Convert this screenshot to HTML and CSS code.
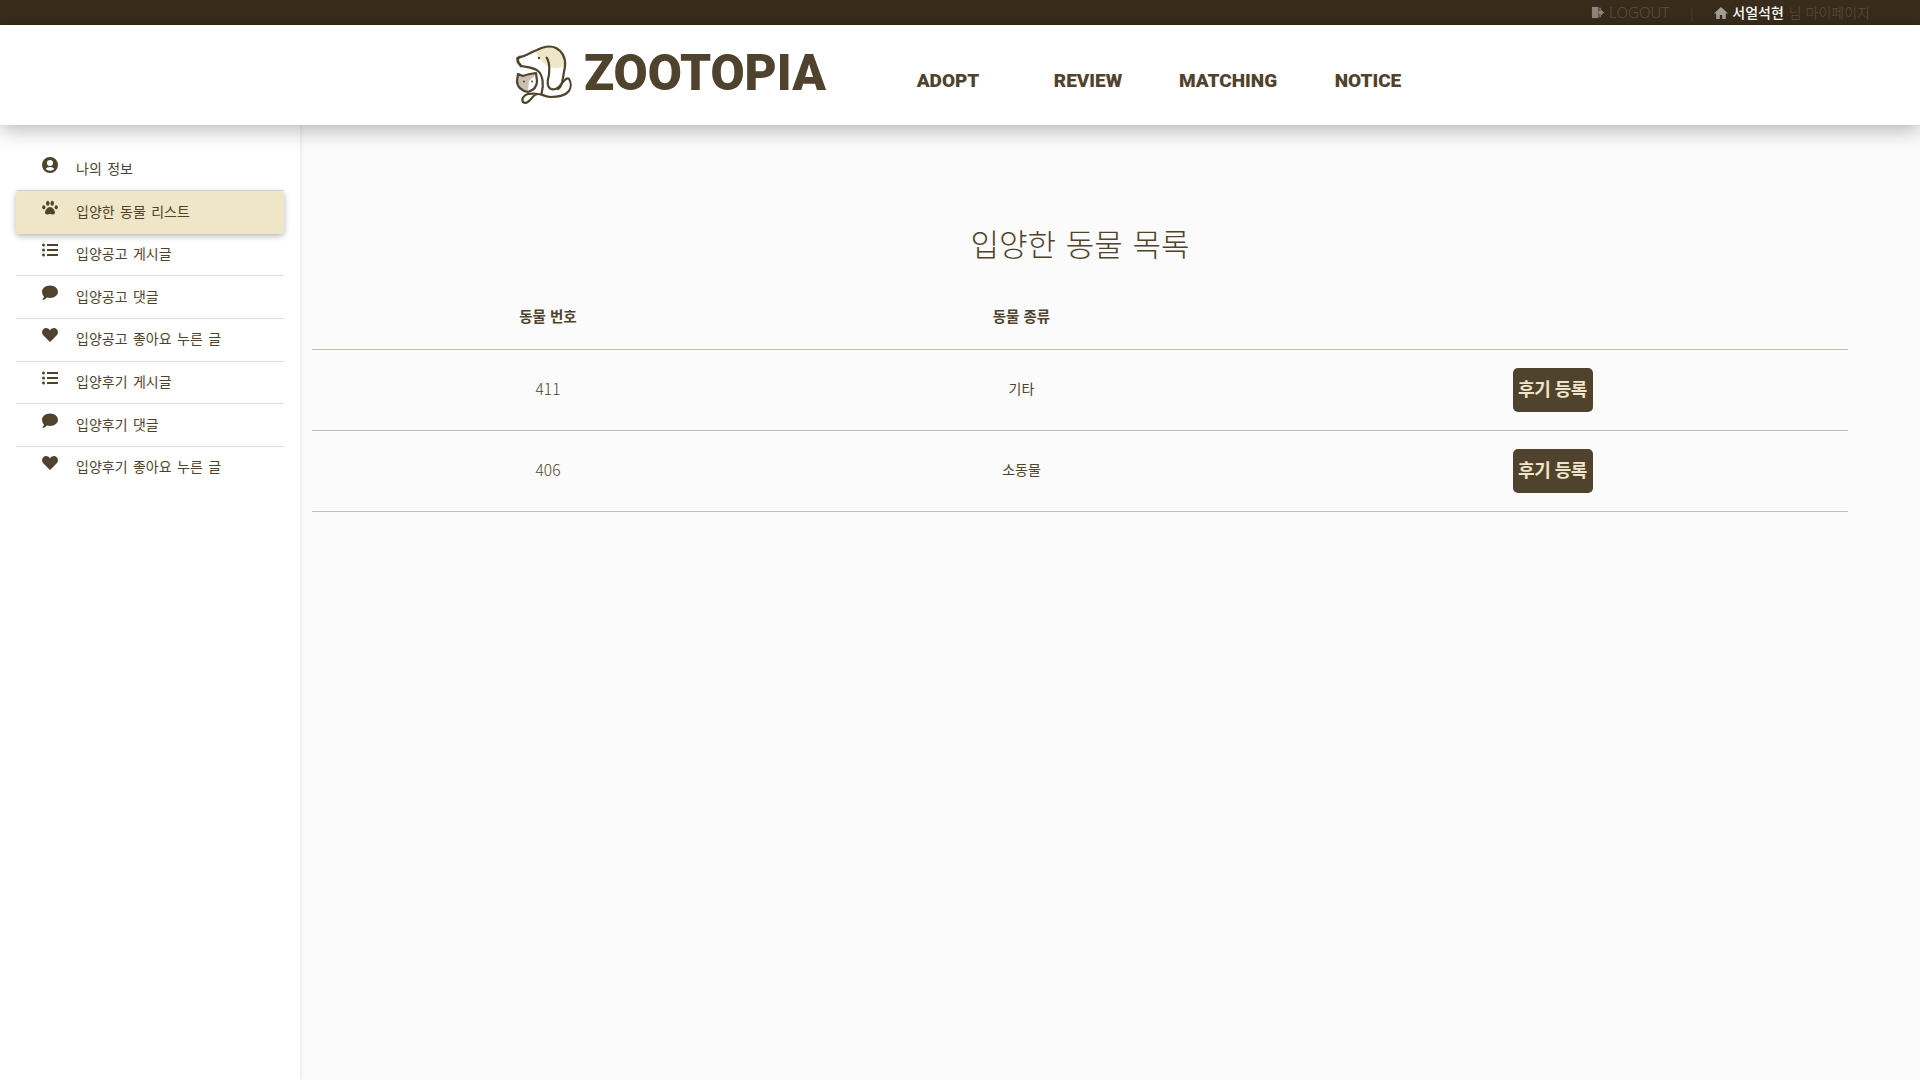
FILE: index.html
```html
<!DOCTYPE html>
<html lang="ko">
<head>
<meta charset="utf-8">
<title>ZOOTOPIA</title>
<link rel="stylesheet" href="styles.css">
</head>
<body>
<div class="topbar">
  <a class="top-dim top-link">
    <svg class="top-icon" viewBox="0 0 14 14"><path d="M1 1h7v12H1z" fill="#8f877c"/><path d="M9 2h1.500v3H9zM9 9h1.500v3H9z" fill="#8f877c"/><path d="M8 5.500h2.500V3.500L14 7l-3.500 3.500V8.500H8z" fill="#8f877c"/></svg>
    LOGOUT
  </a>
  <span class="top-dim top-sep">|</span>
  <svg class="top-icon home" viewBox="0 0 14 14"><path d="M7 1 0 7.500h2.200V13h3.600V9h2.400v4h3.600V7.500H14z" fill="#a8a196"/></svg>
  <span class="top-name">서얼석현</span>
  <span class="top-dim top-my">님 마이페이지</span>
</div>

<header class="header">
  <a class="logo">
    <svg class="logo-mark" viewBox="15 13 60 62">
      <path d="M35 20C42 16 50 14 56 17 62 20 66 27 65 35 58 38 50 38 45 33 41 30 38 25 35 20Z" fill="#efe6c8"/>
      <path d="M20 26C26 25 31 21 37 19 42 16 50 14 56 17 62 20 66 27 65 35 64 41 63 47 62 52 61 55 60 57 58 58" fill="none" stroke="#50432e" stroke-width="2.200" stroke-linecap="round"/>
      <path d="M20 26 17.500 27.500 18 31 21 35" fill="none" stroke="#50432e" stroke-width="2.800" stroke-linecap="round" stroke-linejoin="round"/>
      <path d="M21 35C26 36 33 36 38 40 43 44 44 54 41.500 63" fill="none" stroke="#50432e" stroke-width="2.200" stroke-linecap="round"/>
      <path d="M46.700 26.700C50 32 50 42 47.700 50 47.500 54 48.500 57 51 58 55 59 59 57 62 52" fill="none" stroke="#50432e" stroke-width="2.200" stroke-linecap="round"/>
      <path d="M62 52C65 49 67 46 69 48 71 51 71.500 56 69 60 65 65 57 66 50 66 44 65 41 63 38 63 34 63 33 66 31 68 28 71.500 25 72.500 23 71 21 68 24 64 28 63 31 62.500 35 62.500 38 63" fill="none" stroke="#50432e" stroke-width="2.200" stroke-linecap="round"/>
      <path d="M18 43 23 45C25.500 44 28 43.500 30 43L36 42 37 50C37 55 35 59 28 61 22 60 17 56 17 50Z" fill="#cbc1b2"/>
      <path d="M29 50 36.500 43 37 50C37 55 35 59 28 61Z" fill="#fff"/>
      <path d="M18 43 23 45C25.500 44 28 43.500 30 43L36 42 37 50C37 55 35 59 28 61 22 60 17 56 17 50Z" fill="none" stroke="#50432e" stroke-width="2.200" stroke-linejoin="round"/>
      <circle cx="39" cy="27" r="1.200" fill="#50432e"/><circle cx="24" cy="50.500" r=".9" fill="#50432e"/><circle cx="32" cy="50.500" r=".9" fill="#50432e"/>
    </svg>
    <span class="logo-text">ZOOTOPIA</span>
  </a>
  <nav class="nav">
    <a class="nav-item">ADOPT</a>
    <a class="nav-item">REVIEW</a>
    <a class="nav-item">MATCHING</a>
    <a class="nav-item">NOTICE</a>
  </nav>
</header>

<div class="layout">
  <aside class="sidebar">
    <a class="side-item">
      <svg class="side-icon" viewBox="0 0 16 16"><path fill-rule="evenodd" d="M8 0a8 8 0 1 1 0 16A8 8 0 0 1 8 0Zm0 3a3 3 0 1 0 0 6 3 3 0 0 0 0-6Zm0 7c-2 0-3.700.8-4.300 2a6 6 0 0 0 8.600 0C11.700 10.800 10 10 8 10Z"/></svg>
      나의 정보
    </a>
    <a class="side-item active">
      <svg class="side-icon" viewBox="0 0 16 16"><path d="M8 7c2.500 0 5 3.300 5 5.800 0 1.300-1 1.700-2.100 1.700-1.200 0-2-.6-2.900-.6s-1.700.6-2.900.6C4 14.500 3 14.100 3 12.800 3 10.300 5.500 7 8 7Z"/><ellipse cx="5.800" cy="3.300" rx="1.700" ry="2.500"/><ellipse cx="10.200" cy="3.300" rx="1.700" ry="2.500"/><ellipse cx="1.800" cy="7.300" rx="1.600" ry="2.100"/><ellipse cx="14.200" cy="7.300" rx="1.600" ry="2.100"/></svg>
      입양한 동물 리스트
    </a>
    <a class="side-item">
      <svg class="side-icon" viewBox="0 0 16 16"><circle cx="1.500" cy="3" r="1.500"/><circle cx="1.500" cy="8" r="1.500"/><circle cx="1.500" cy="13" r="1.500"/><path d="M5 2h11v2H5zM5 7h11v2H5zM5 12h11v2H5z"/></svg>
      입양공고 게시글
    </a>
    <a class="side-item">
      <svg class="side-icon" viewBox="0 0 16 16"><path d="M8 .5c4.400 0 8 2.800 8 6.200s-3.600 6.200-8 6.200c-1 0-2-.1-2.900-.4C4 13.500 2.200 15 0 15c1-.9 1.700-2.400 1.900-3.500C.7 10.300 0 8.500 0 6.700 0 3.300 3.600.5 8 .5Z"/></svg>
      입양공고 댓글
    </a>
    <a class="side-item">
      <svg class="side-icon" viewBox="0 0 16 16"><path d="M8 15 1.500 8.500C-.5 6.500-.3 3.500 1.500 2 3.400.5 6 .9 8 3.200 10 .9 12.600.5 14.500 2c1.800 1.500 2 4.500 0 6.500Z"/></svg>
      입양공고 좋아요 누른 글
    </a>
    <a class="side-item">
      <svg class="side-icon" viewBox="0 0 16 16"><circle cx="1.500" cy="3" r="1.500"/><circle cx="1.500" cy="8" r="1.500"/><circle cx="1.500" cy="13" r="1.500"/><path d="M5 2h11v2H5zM5 7h11v2H5zM5 12h11v2H5z"/></svg>
      입양후기 게시글
    </a>
    <a class="side-item">
      <svg class="side-icon" viewBox="0 0 16 16"><path d="M8 .5c4.400 0 8 2.800 8 6.200s-3.600 6.200-8 6.200c-1 0-2-.1-2.900-.4C4 13.500 2.200 15 0 15c1-.9 1.700-2.400 1.900-3.500C.7 10.300 0 8.500 0 6.700 0 3.300 3.600.5 8 .5Z"/></svg>
      입양후기 댓글
    </a>
    <a class="side-item last">
      <svg class="side-icon" viewBox="0 0 16 16"><path d="M8 15 1.500 8.500C-.5 6.500-.3 3.500 1.500 2 3.400.5 6 .9 8 3.200 10 .9 12.600.5 14.500 2c1.800 1.500 2 4.500 0 6.500Z"/></svg>
      입양후기 좋아요 누른 글
    </a>
  </aside>

  <main class="content">
    <h1 class="title">입양한 동물 목록</h1>
    <table class="list">
      <colgroup><col class="col-a"><col class="col-b"><col class="col-c"></colgroup>
      <thead>
        <tr><th>동물 번호</th><th>동물 종류</th><th></th></tr>
      </thead>
      <tbody>
        <tr><td class="num">411</td><td>기타</td><td><button class="btn">후기 등록</button></td></tr>
        <tr><td class="num">406</td><td>소동물</td><td><button class="btn">후기 등록</button></td></tr>
      </tbody>
    </table>
  </main>
</div>
</body>
</html>
```
FILE: styles.css
```css
* { box-sizing: border-box; }
html, body { margin: 0; height: 100%; }
body {
  display: flex;
  flex-direction: column;
  height: 1080px;
  overflow: hidden;
  font-family: "Noto Sans CJK KR", "Noto Sans", sans-serif;
  color: #50432e;
  background: #fff;
}

.topbar {
  height: 25px;
  flex: none;
  background: #392c1b;
  display: flex;
  align-items: center;
  justify-content: flex-end;
  padding-right: 50px;
  font-size: 14px;
  line-height: 25px;
}
.top-dim { color: #5d5141; font-weight: 300; }
.top-link { display: flex; align-items: center; font-family: "Noto Sans", sans-serif; font-size: 15px; gap: 5px; }
.top-sep { margin: 0 21px; font-size: 12px; }
.top-icon { width: 13px; height: 13px; flex: none; }
.top-icon.home { width: 14px; height: 14px; margin-right: 4px; }
.top-name { color: #fff; font-weight: 500; }
.top-my { margin-left: 5px; font-size: 14px; }

.header {
  position: relative;
  z-index: 2;
  height: 100px;
  flex: none;
  background: #fff;
  box-shadow: 0 4px 20px rgba(0, 0, 0, .3);
  display: flex;
  padding-left: 515px;
}
.logo { display: flex; align-items: center; width: 363px; }
.logo-mark { width: 60px; height: 62px; flex: none; }
.logo-text {
  margin: 0 0 4px 9px;
  font-family: "Roboto", sans-serif;
  font-weight: 900;
  font-size: 49.500px;
  line-height: 60px;
  color: #50432e;
}
.nav { display: flex; align-items: center; padding-top: 10px; }
.nav-item {
  width: 140px;
  text-align: center;
  font-family: "Roboto", sans-serif;
  font-weight: 900;
  font-size: 19px;
  color: #50432e;
}

.layout { flex: 1; display: flex; min-height: 0; }
.sidebar {
  width: 300px;
  flex: none;
  padding: 23.600px 16px 0;
  background: #fff;
  box-shadow: 1px 0 4px rgba(0, 0, 0, .08);
  position: relative;
  z-index: 1;
}
.side-item {
  display: flex;
  align-items: flex-start;
  height: 42.600px;
  padding: 8.500px 0 0 26px;
  border-bottom: 1px solid #ddd;
  font-size: 14px;
  line-height: 22px;
  font-weight: 400;
  word-spacing: 1.500px;
  color: #50432e;
}
.side-icon { width: 16px; height: 16px; margin: 0 18px 0 0; fill: #50432e; flex: none; }
.side-item.active {
  background: #efe6c8;
  border-radius: 4px;
  border-bottom: 0;
  box-shadow: 0 2px 6px rgba(0, 0, 0, .3);
}
.side-item.last { border-bottom: 0; }

.content { flex: 1; padding: 0 72px 0 12px; background: #fbfbfb; }
.title {
  margin: 96px 0 0;
  text-align: center;
  font-size: 31px;
  line-height: 44px;
  font-weight: 300;
  word-spacing: 1px;
  color: #50432e;
}
.list { width: 100%; margin-top: 9px; border-collapse: collapse; table-layout: fixed; }
.col-a { width: 472px; }
.col-b { width: 475px; }
.list th { height: 75px; font-size: 14.500px; font-weight: 700; text-align: center; padding: 8px 0 0; border-bottom: 1px solid #c9bdb0; }
.list td { height: 81px; font-size: 14px; font-weight: 400; text-align: center; padding: 0 0 3px; border-bottom: 1px solid #c9bdb0; }
.list td:last-child { padding: 0 2px 0 0; }
.list td.num { font-size: 15.500px; font-weight: 300; }
.btn {
  width: 80px;
  height: 44px;
  padding: 0 0 4px;
  border: 0;
  border-radius: 5px;
  background: #50432e;
  color: #efe6c8;
  font-family: "Noto Sans CJK KR", sans-serif;
  font-size: 18px;
  font-weight: 700;
  letter-spacing: -.5px;
  vertical-align: middle;
}
```
